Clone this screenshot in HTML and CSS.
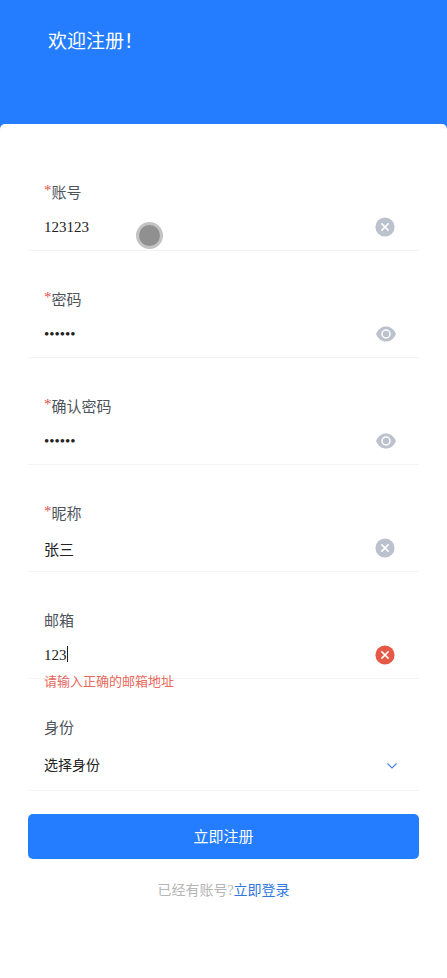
FILE: index.html
```html
<!DOCTYPE html>
<html lang="zh-CN">
<head>
<meta charset="utf-8">
<meta name="viewport" content="width=device-width, initial-scale=1">
<title>注册</title>
<link rel="stylesheet" href="styles.css">
</head>
<body>
<svg class="sprite" aria-hidden="true">
  <symbol id="clear" viewBox="0 0 20 20"><circle cx="10" cy="10" r="9.600" fill="currentColor"/><path d="M6.400 6.400l7.200 7.200M13.600 6.400l-7.200 7.200" stroke="#fff" stroke-width="1.500"/></symbol>
  <symbol id="eye" viewBox="0 0 20 16"><path d="M0 8C2.200 3 5.700.4 10 .4S17.800 3 20 8c-2.200 5-5.700 7.600-10 7.600S2.200 13 0 8z" fill="currentColor"/><circle cx="10" cy="8" r="4" fill="none" stroke="#fff" stroke-width="1.500"/></symbol>
</svg>
<header class="hero"><h1>欢迎注册！</h1></header>
<main class="panel">
  <form class="form">
    <div class="field">
      <label for="account"><span class="star">*</span>账号</label>
      <div class="row">
        <input id="account" type="text" value="123123">
        <button class="icon" type="button" aria-label="清除账号"><svg class="round"><use href="#clear"/></svg></button>
        <span class="touch"></span>
      </div>
    </div>
    <div class="field">
      <label for="pwd"><span class="star">*</span>密码</label>
      <div class="row">
        <input id="pwd" type="password" value="123456">
        <button class="icon reveal" type="button" aria-label="显示密码"><svg class="eye"><use href="#eye"/></svg></button>
      </div>
    </div>
    <div class="field">
      <label for="pwd2"><span class="star">*</span>确认密码</label>
      <div class="row">
        <input id="pwd2" type="password" value="123456">
        <button class="icon reveal" type="button" aria-label="显示确认密码"><svg class="eye"><use href="#eye"/></svg></button>
      </div>
    </div>
    <div class="field">
      <label for="nick"><span class="star">*</span>昵称</label>
      <div class="row">
        <input id="nick" type="text" value="张三">
        <button class="icon" type="button" aria-label="清除昵称"><svg class="round"><use href="#clear"/></svg></button>
      </div>
    </div>
    <div class="field">
      <label for="email">邮箱</label>
      <div class="row">
        <input id="email" type="text" value="123" aria-describedby="email-error">
        <button class="icon invalid" type="button" aria-label="清除邮箱"><svg class="round"><use href="#clear"/></svg></button>
        <span class="caret"></span>
      </div>
      <p class="error" id="email-error">请输入正确的邮箱地址</p>
    </div>
    <div class="field">
      <label for="role">身份</label>
      <div class="row select-row">
        <select id="role"><option>选择身份</option></select>
        <svg class="chevron" viewBox="0 0 10 6"><path d="M.5.5L5 5 9.500.5" fill="none" stroke="currentColor" stroke-width="1.200"/></svg>
      </div>
    </div>
    <button class="submit" type="submit">立即注册</button>
  </form>
  <p class="login">已经有账号?<a href="#login">立即登录</a></p>
</main>
</body>
</html>
```
FILE: styles.css
```css
* {
  box-sizing: border-box;
}

body {
  margin: 0;
  background: #fff;
  color: #222;
  font: 15px/22px "Liberation Serif", "Noto Sans CJK SC", serif;
}

.sprite {
  position: absolute;
  width: 0;
  height: 0;
}

.hero {
  height: 130px;
  padding: 28px 48px;
  background: #247dff;
  color: #fff;
}

.hero h1 {
  margin: 0;
  font-size: 19px;
  line-height: 28px;
  font-weight: 400;
}

.panel {
  margin-top: -6px;
  padding: 20px 28px 76px;
  border-radius: 5px;
  background: #fff;
}

.field {
  position: relative;
  padding: 38px 16px 0;
  border-bottom: 1px solid #f4f4f4;
}

.field label {
  display: block;
  color: #4e535a;
}

.star {
  color: #dd524d;
  line-height: 1;
  vertical-align: 3px;
}

.row {
  position: relative;
  display: flex;
  align-items: center;
  height: 46px;
}

.row input,
.row select {
  flex: 1;
  min-width: 0;
  height: 100%;
  padding: 0;
  border: 0;
  outline: 0;
  background: none;
  color: #222;
  font: inherit;
}

.icon {
  display: flex;
  justify-content: center;
  width: 36px;
  padding: 0;
  border: 0;
  background: none;
  color: #bcc2cd;
}

.reveal {
  width: 34px;
}

.invalid {
  color: #e45a46;
}

.round {
  width: 20px;
  height: 20px;
}

.eye {
  width: 20px;
  height: 16px;
}

.touch {
  position: absolute;
  left: 92px;
  top: 18px;
  width: 27px;
  height: 27px;
  border: 3px solid #c3c3c3;
  border-radius: 50%;
  background: #909090;
}

.caret {
  position: absolute;
  left: 23px;
  top: 14px;
  width: 1px;
  height: 16px;
  background: #222;
}

.error {
  position: absolute;
  left: 16px;
  top: 100px;
  margin: 0;
  color: #e8685c;
  font-size: 13px;
  line-height: 20px;
}

.select-row {
  height: 51px;
  padding-top: 3px;
}

.row select {
  appearance: none;
  font-size: 14px;
}

.chevron {
  width: 10px;
  height: 6px;
  margin-right: 6px;
  color: #4a86dc;
}

.submit {
  display: block;
  width: 100%;
  height: 45px;
  margin-top: 23px;
  padding: 0;
  border: 0;
  border-radius: 5px;
  background: #247dff;
  color: #fff;
  font: inherit;
}

.login {
  margin: 21px 0 0;
  color: #b5b5b5;
  font-size: 14px;
  text-align: center;
}

.login a {
  color: #2f78dc;
  text-decoration: none;
}
```
